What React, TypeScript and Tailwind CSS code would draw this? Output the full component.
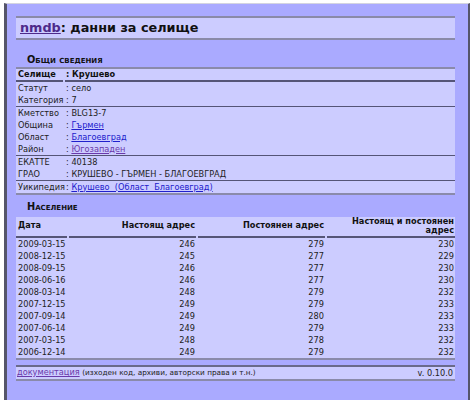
import React from "react";

const infoGroups: { label: string; value: React.ReactNode }[][] = [
  [
    { label: "Статут", value: "село" },
    { label: "Категория", value: "7" },
  ],
  [
    { label: "Кметство", value: "BLG13-7" },
    { label: "Община", value: <a className="text-[#2020cc] underline">Гърмен</a> },
    { label: "Област", value: <a className="text-[#2020cc] underline">Благоевград</a> },
    { label: "Район", value: <a className="text-[#6a3aaa] underline">Югозападен</a> },
  ],
  [
    { label: "ЕКАТТЕ", value: "40138" },
    { label: "ГРАО", value: "КРУШЕВО - ГЪРМЕН - БЛАГОЕВГРАД" },
  ],
  [
    {
      label: "Уикипедия",
      value: (
        <a className="text-[#2020cc] underline whitespace-pre">Крушево  (Област  Благоевград)</a>
      ),
    },
  ],
];

const pop: [string, number, number, number][] = [
  ["2009-03-15", 246, 279, 230],
  ["2008-12-15", 245, 277, 229],
  ["2008-09-15", 246, 277, 230],
  ["2008-06-16", 246, 277, 230],
  ["2008-03-14", 248, 279, 232],
  ["2007-12-15", 249, 279, 233],
  ["2007-09-14", 249, 280, 233],
  ["2007-06-14", 249, 279, 233],
  ["2007-03-15", 248, 278, 232],
  ["2006-12-14", 249, 279, 232],
];

export default function App() {
  return (
    <div className="w-[474px] h-[404px] bg-white pt-[3px] pl-[4px] font-['DejaVu_Sans',Verdana,sans-serif] text-[8.2px] text-[#222] whitespace-nowrap">
      <div className="w-[466px] h-[397px] border-t border-t-[#d4d4e0] border-l-[3px] border-l-[#55556a] border-r-[2px] border-r-[#55556a] bg-[#aaaaff] pl-[9px] pt-[12px]">
        {/* Title */}
        <div className="w-[439px] h-[24px] border-y-2 border-[#8a8aa8] bg-[#ccccff] pl-[4px] pt-[1px] text-[12.8px] leading-[18px] font-bold text-[#111]">
          <a className="text-[#4e2a8a] underline">nmdb</a>: данни за селище
        </div>

        {/* General info */}
        <div className="mt-[14px] mb-[1px] h-[12px] leading-[12px] pl-[11px] text-[9.8px] font-bold [font-variant:small-caps] text-[#111]">
          Общи сведения
        </div>
        <div className="w-[439px] bg-[#ccccff] border-t-2 border-t-[#8a8aaa] border-b-2 border-b-[#8a8aaa]">
          <div className="grid grid-cols-[47px_1fr] gap-x-[2px] font-bold text-[#111]">
            <div className="border-b-2 border-[#555577] leading-[10.5px] pl-[2px]">Селище</div>
            <div className="border-b-2 border-[#555577] leading-[10.5px] pl-[1px]">: Крушево</div>
          </div>
          {infoGroups.map((g, gi) => (
            <div
              key={gi}
              className={
                gi < infoGroups.length - 1 ? "border-b border-[#555577]" : ""
              }
            >
              {g.map((r) => (
                <div key={r.label} className="grid grid-cols-[47px_1fr] gap-x-[2px] leading-[12px]">
                  <div className="pl-[2px]">{r.label}</div>
                  <div className="pl-[1px]">
                    : {r.value}
                  </div>
                </div>
              ))}
            </div>
          ))}
        </div>

        {/* Population */}
        <div className="mt-[6px] mb-[4px] h-[12px] leading-[12px] pl-[11px] text-[9.8px] font-bold [font-variant:small-caps] text-[#111]">
          Население
        </div>
        <div className="w-[439px] bg-[#ccccff] border-b-2 border-[#8a8aaa]">
          <div className="grid grid-cols-[51px_127px_127px_1fr] gap-x-[2px] font-bold text-[#111]">
            <div className="h-[21px] border-b-2 border-[#555577] flex items-center pl-[2px] leading-[9.5px]">Дата</div>
            <div className="h-[21px] border-b-2 border-[#555577] flex items-center justify-end pr-[1px] leading-[9.5px]">Настоящ адрес</div>
            <div className="h-[21px] border-b-2 border-[#555577] flex items-center justify-end pr-[1px] leading-[9.5px]">Постоянен адрес</div>
            <div className="h-[21px] border-b-2 border-[#555577] flex items-center justify-end pr-[1px] leading-[9.5px] text-right">
              <span>
                Настоящ и постоянен
                <br />
                адрес
              </span>
            </div>
          </div>
          {pop.map((r) => (
            <div key={r[0]} className="grid grid-cols-[51px_127px_127px_1fr] gap-x-[2px] leading-[12px]">
              <div className="pl-[2px]">{r[0]}</div>
              <div className="text-right pr-[1px]">{r[1]}</div>
              <div className="text-right pr-[1px]">{r[2]}</div>
              <div className="text-right pr-[1px]">{r[3]}</div>
            </div>
          ))}
        </div>

        {/* Footer */}
        <div className="mt-[5px] w-[439px] h-[16px] bg-[#ccccff] border-t-2 border-t-[#6a6a8a] border-b-2 border-b-[#8a8aaa] flex items-center justify-between leading-[12px] pl-[1px] pr-[2px]">
          <div>
            <a className="text-[#6a3aaa] underline">документация</a>{" "}
            <span className="text-[7.3px]">(изходен код, архиви, авторски права и т.н.)</span>
          </div>
          <div>v. 0.10.0</div>
        </div>
      </div>
    </div>
  );
}
